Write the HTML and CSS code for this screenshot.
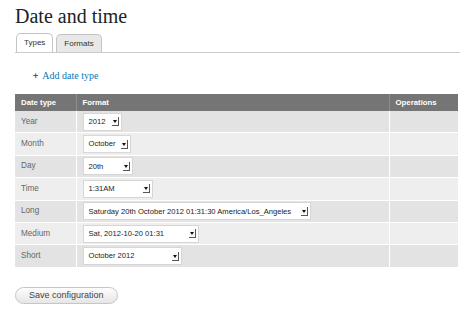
FILE: index.html
```html
<!DOCTYPE HTML>
<html>
<head>
<meta charset="utf-8">
<title>Date and time</title>
<link rel="stylesheet" href="styles.css">
</head>
<body>
<div class="page">
  <h1 class="title">Date and time</h1>
  <ul class="tabs">
    <li class="tab active">Types</li>
    <li class="tab">Formats</li>
  </ul>
  <div class="action"><span class="plus">+</span><a href="#">Add date type</a></div>
  <table class="formats">
    <colgroup>
      <col class="c-type">
      <col class="c-format">
      <col class="c-ops">
    </colgroup>
    <thead>
      <tr><th>Date type</th><th>Format</th><th>Operations</th></tr>
    </thead>
    <tbody>
      <tr class="odd"><td>Year</td><td><span class="sel w-year">2012<i class="arrow"></i></span></td><td></td></tr>
      <tr class="even"><td>Month</td><td><span class="sel w-month">October<i class="arrow"></i></span></td><td></td></tr>
      <tr class="odd"><td>Day</td><td><span class="sel w-day">20th<i class="arrow"></i></span></td><td></td></tr>
      <tr class="even"><td>Time</td><td><span class="sel w-time">1:31AM<i class="arrow"></i></span></td><td></td></tr>
      <tr class="odd"><td>Long</td><td><span class="sel w-long">Saturday 20th October 2012 01:31:30 America/Los_Angeles<i class="arrow"></i></span></td><td></td></tr>
      <tr class="even"><td>Medium</td><td><span class="sel w-medium">Sat, 2012-10-20 01:31<i class="arrow"></i></span></td><td></td></tr>
      <tr class="odd"><td>Short</td><td><span class="sel w-short">October 2012<i class="arrow"></i></span></td><td></td></tr>
    </tbody>
  </table>
  <button class="f-btn" type="button">Save configuration</button>
</div>
</body>
</html>
```

FILE: styles.css
```css
body, h1, ul, li, table, button {
	margin:0;
	padding:0;
}
body {
	background:#FFF;
	color:#555;
	font:8px/1.5 "Liberation Sans", Arial, sans-serif;
}
.page {
	padding:0 15px;
}
.title {
	margin-top:4px;
	color:#222;
	font:400 20px/24px "Liberation Serif", Georgia, serif;
}
.tabs {
	display:flex;
	align-items:flex-end;
	gap:3px;
	margin-top:5px;
	padding-left:1px;
	width:444px;
	border-bottom:1px solid #CCC;
	list-style:none;
}
.tab {
	height:17px;
	padding:0 7px;
	color:#333;
	line-height:17px;
	background:#E8E8E8;
	border:1px solid #C4C4C4;
	border-bottom:0;
	border-radius:5px 5px 0 0;
}
.tab.active {
	height:18px;
	line-height:18px;
	background:#FFF;
}
.action {
	margin:16px 0 0 18px;
	height:14px;
	font:10px/14px "Liberation Serif", Georgia, serif;
}
.action .plus {
	margin-right:4px;
	color:#555;
	font:700 9px/14px "Liberation Sans", Arial, sans-serif;
}
.action a {
	color:#0A74B4;
	text-decoration:none;
}
.formats {
	margin-top:11px;
	width:443px;
	border-collapse:collapse;
	table-layout:fixed;
}
.c-type { width:61px; }
.c-format { width:313px; }
.c-ops { width:69px; }
.formats th {
	height:17px;
	padding:0 6px;
	color:#FFF;
	font-size:7.8px;
	text-align:left;
	background:#757575;
	border-left:1px solid #8E8E8E;
}
.formats th:first-child {
	border-left:0;
}
.formats td {
	height:21.4px;
	padding:0 6px;
	color:#666;
	font-size:8.2px;
	border-left:1px solid #FFF;
	border-bottom:1px solid #FFF;
}
.formats td:first-child {
	border-left:0;
}
.formats tr.odd td {
	background:#E3E3E3;
}
.formats tr.even td {
	background:#EFEEEE;
}
.sel {
	display:inline-flex;
	align-items:center;
	justify-content:space-between;
	box-sizing:border-box;
	height:18px;
	padding:0 2px 0 5px;
	color:#222;
	font-size:7.6px;
	vertical-align:middle;
	white-space:nowrap;
	background:#FFF;
	border:1px solid #D6D6D6;
}
.arrow {
	position:relative;
	flex:none;
	box-sizing:border-box;
	width:7px;
	height:9px;
	margin-left:4px;
	border-right:1px solid #555;
	border-bottom:1px solid #555;
	background:#FAFAFA;
}
.arrow:after {
	content:"";
	position:absolute;
	left:1px;
	top:3px;
	border-left:2px solid transparent;
	border-right:2px solid transparent;
	border-top:3px solid #111;
}
.w-year { width:39px; }
.w-month { width:48px; }
.w-day { width:50px; }
.w-time { width:70px; }
.w-long { width:228px; }
.w-medium { width:116px; }
.w-short { width:99px; }
.f-btn {
	margin-top:19px;
	height:17px;
	padding:0 13px;
	color:#444;
	font:9px/15px "Liberation Sans", Arial, sans-serif;
	background:linear-gradient(#FDFDFD, #E6E6E6);
	border:1px solid #C6C6C6;
	border-radius:10px;
	cursor:pointer;
}
```
